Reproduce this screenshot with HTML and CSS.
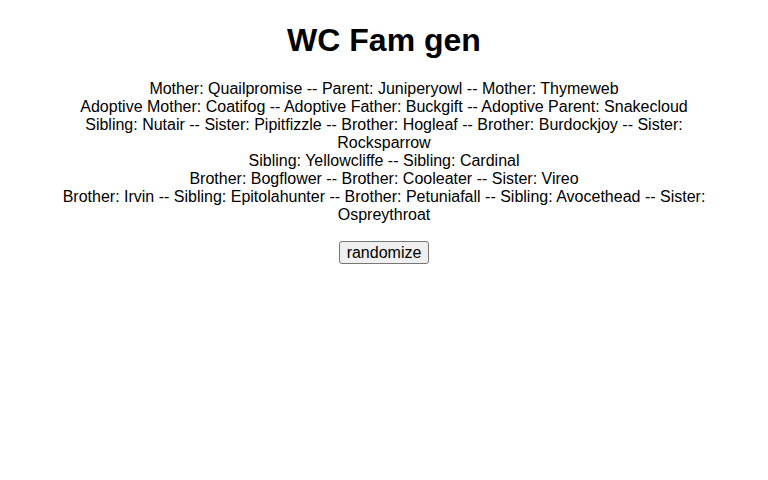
FILE: index.html
```html
<!DOCTYPE html>
<html>
<head>
<meta charset="utf-8">
<title>WC Fam gen</title>
<link rel="stylesheet" href="styles.css">
</head>
<body>
<main class="page">
  <h1 class="title">WC Fam gen</h1>
  <div class="family">
    <div class="row">Mother: Quailpromise -- Parent: Juniperyowl -- Mother: Thymeweb</div>
    <div class="row">Adoptive Mother: Coatifog -- Adoptive Father: Buckgift -- Adoptive Parent: Snakecloud</div>
    <div class="row">Sibling: Nutair -- Sister: Pipitfizzle -- Brother: Hogleaf -- Brother: Burdockjoy -- Sister: Rocksparrow</div>
    <div class="row">Sibling: Yellowcliffe -- Sibling: Cardinal</div>
    <div class="row">Brother: Bogflower -- Brother: Cooleater -- Sister: Vireo</div>
    <div class="row">Brother: Irvin -- Sibling: Epitolahunter -- Brother: Petuniafall -- Sibling: Avocethead -- Sister: Ospreythroat</div>
  </div>
  <div class="actions">
    <button class="btn" type="button">randomize</button>
  </div>
</main>
</body>
</html>
```

FILE: styles.css
```css
body {
  margin: 8px;
  font-family: "Liberation Sans", Arial, sans-serif;
  color: #000;
  background: #fff;
}

.page {
  text-align: center;
}

.title {
  font-size: 32px;
  font-weight: bold;
  margin: 14px 0 21px;
}

.family {
  font-size: 16px;
  line-height: 18px;
  padding: 0 50px;
}

.actions {
  margin-top: 17px;
}

.btn {
  font-family: "Liberation Sans", Arial, sans-serif;
  font-size: 16px;
  padding: 2px 7px 1px;
  color: #000;
  background: #efefef;
  border: 1px solid #767676;
  border-radius: 3px;
}
```
